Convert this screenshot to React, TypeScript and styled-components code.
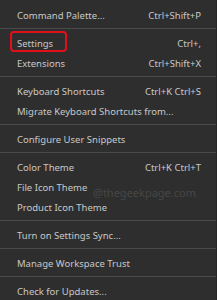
import React from "react";
import styled, { createGlobalStyle } from "styled-components";

type Item = { label: string; keys?: string; marked?: boolean } | "sep";

const items: Item[] = [
  { label: "Command Palette...", keys: "Ctrl+Shift+P" },
  "sep",
  { label: "Settings", keys: "Ctrl+,", marked: true },
  { label: "Extensions", keys: "Ctrl+Shift+X" },
  "sep",
  { label: "Keyboard Shortcuts", keys: "Ctrl+K Ctrl+S" },
  { label: "Migrate Keyboard Shortcuts from..." },
  "sep",
  { label: "Configure User Snippets" },
  "sep",
  { label: "Color Theme", keys: "Ctrl+K Ctrl+T" },
  { label: "File Icon Theme" },
  { label: "Product Icon Theme" },
  "sep",
  { label: "Turn on Settings Sync..." },
  "sep",
  { label: "Manage Workspace Trust" },
  "sep",
  { label: "Check for Updates..." },
];

export default function App() {
  return (
    <>
      <GlobalStyle />
      <Menu>
        {items.map((item, i) =>
          item === "sep" ? (
            <Separator key={i} />
          ) : (
            <Row key={i} $marked={item.marked}>
              <Label>{item.label}</Label>
              {item.keys && <Keys>{item.keys}</Keys>}
            </Row>
          )
        )}
        <Watermark>@thegeekpage.com</Watermark>
      </Menu>
    </>
  );
}

const GlobalStyle = createGlobalStyle`
  html, body {
    margin: 0;
    padding: 0;
    background: #2e2e2e;
  }
`;

const Menu = styled.div`
  position: relative;
  width: 217px;
  height: 300px;
  box-sizing: border-box;
  padding-top: 5px;
  background: #2e2e2e;
  border-right: 1px solid #262626;
  overflow: hidden;
  font-family: "Noto Sans", "Open Sans", sans-serif;
  font-size: 9.5px;
  color: #c8c8c8;
`;

const Row = styled.div<{ $marked?: boolean }>`
  position: relative;
  height: 20px;
  display: flex;
  align-items: center;
  justify-content: space-between;
  padding: 0 15px 0 17px;
  white-space: nowrap;

  ${(p) =>
    p.$marked &&
    `
    &::after {
      content: "";
      position: absolute;
      left: 10px;
      top: -2px;
      width: 57px;
      height: 21px;
      box-sizing: border-box;
      border: 2px solid #e3101c;
      border-radius: 4px;
    }
  `}
`;

const Label = styled.span``;

const Keys = styled.span`
  color: #c8c8c8;
`;

const Separator = styled.div`
  height: 8px;
  position: relative;

  &::before {
    content: "";
    position: absolute;
    left: 0;
    right: 0;
    top: 3px;
    height: 1px;
    background: #4a4a4a;
  }
`;

const Watermark = styled.div`
  position: absolute;
  left: 93px;
  top: 185px;
  font-family: "Noto Sans", "Open Sans", sans-serif;
  font-size: 11px;
  color: #474747;
  pointer-events: none;
`;
